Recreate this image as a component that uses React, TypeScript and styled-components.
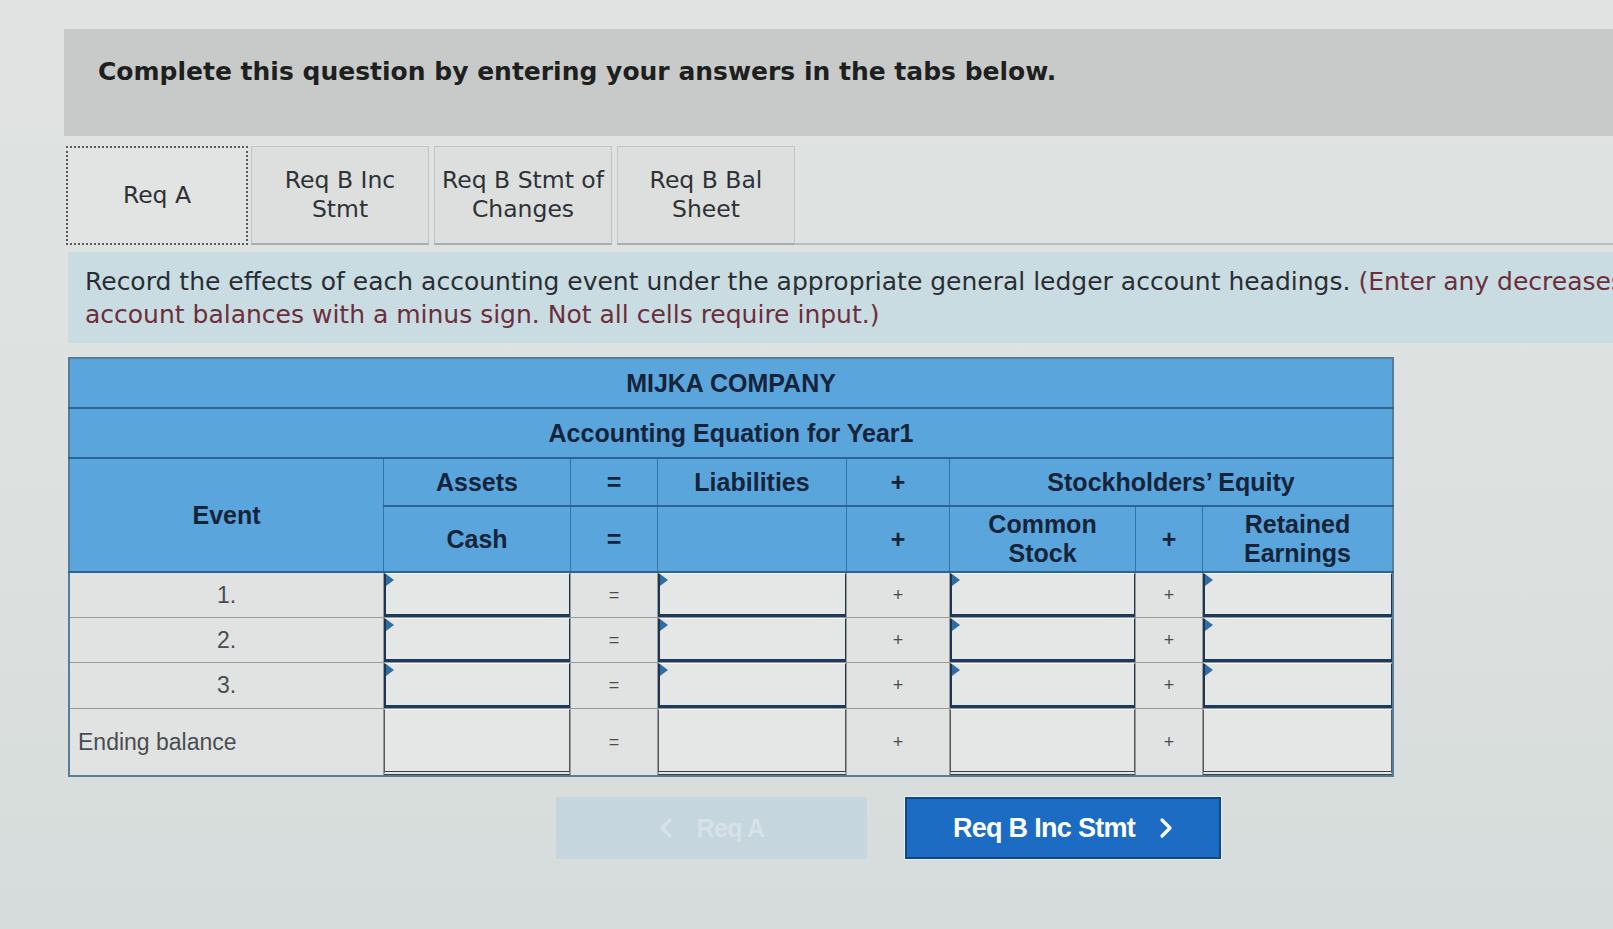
import styled, { createGlobalStyle } from 'styled-components'

const GlobalStyle = createGlobalStyle`
  html, body {
    margin: 0;
    padding: 0;
    overflow: hidden;
    background: #dce1df;
  }
  body {
    font-family: "DejaVu Sans", Verdana, sans-serif;
  }
`

const Page = styled.div`
  width: 1613px;
  height: 929px;
  padding: 29px 0 0 64px;
  box-sizing: border-box;
  overflow: hidden;
  background: linear-gradient(180deg, #e0e3e1 0%, #dce1df 60%, #d6dcdb 100%);
`

const Banner = styled.div`
  height: 107px;
  box-sizing: border-box;
  padding: 25px 0 0 34px;
  background: #c8cac9;
  font-family: "DejaVu Sans", Verdana, sans-serif;
  font-weight: bold;
  font-size: 25px;
  line-height: 36px;
  color: #1d1f20;
  white-space: nowrap;
`

const TabRow = styled.div`
  display: flex;
  align-items: flex-end;
  margin: 10px 0 0 2px;
`

const Tab = styled.div<{ $active?: boolean; $w: number }>`
  width: ${p => p.$w}px;
  height: 99px;
  box-sizing: border-box;
  margin-right: ${p => (p.$active ? 3 : 5)}px;
  display: flex;
  align-items: center;
  justify-content: center;
  text-align: center;
  font-size: 23.5px;
  line-height: 29px;
  color: #2e3236;
  background: ${p => (p.$active ? '#e1e4e2' : '#dcdfdd')};
  border: ${p => (p.$active ? '2px dotted #555a5e' : '1px solid #c2c5c4')};
  border-bottom: ${p => (p.$active ? '2px dotted #555a5e' : '2px solid #a9adac')};
`

const TabFill = styled.div`
  flex: 1;
  border-bottom: 2px solid #b9bdbc;
  height: 99px;
  box-sizing: border-box;
  margin-left: -5px;
`

const Instructions = styled.div`
  margin: 7px 0 0 4px;
  height: 91px;
  box-sizing: border-box;
  padding: 13px 0 0 17px;
  background: #c9dce2;
  font-size: 25px;
  line-height: 33px;
  color: #2a2e33;
  white-space: nowrap;
  overflow: hidden;
`

const Note = styled.span`
  color: #6b2f3c;
`

const Table = styled.table`
  margin: 14px 0 0 4px;
  border-collapse: collapse;
  border: 2px solid #577d98;
  font-family: "Liberation Sans", Arial, sans-serif;
`

const Head = styled.th<{ $w?: number; $h?: number }>`
  ${p => (p.$w ? `width: ${p.$w}px;` : '')}
  ${p => (p.$h ? `height: ${p.$h}px;` : '')}
  padding: 0;
  background: #5aa5db;
  border: 1px solid #3574a8;
  border-bottom: 2px solid #2c6496;
  color: #15243a;
  font-size: 25px;
  font-weight: bold;
  line-height: 29px;
  text-align: center;
`

const Title = styled(Head)`
  border-left: none;
  border-right: none;
`

const Row = styled.tr<{ $h: number }>`
  height: ${p => p.$h}px;
`

const Plain = styled.td<{ $left?: boolean; $small?: boolean }>`
  padding: 0;
  padding-left: ${p => (p.$left ? '8px' : '0')};
  background: #e1e3e2;
  border: 1px solid #979a99;
  color: #4a4d50;
  font-size: ${p => (p.$small ? '18px' : '23px')};
  text-align: ${p => (p.$left ? 'left' : 'center')};
  vertical-align: middle;
`

const FieldCell = styled.td`
  padding: 0;
  background: #e1e3e2;
  border: 1px solid #979a99;
  vertical-align: top;
`

const Field = styled.div<{ $h: number; $total?: boolean }>`
  position: relative;
  height: ${p => p.$h}px;
  box-sizing: border-box;
  background: #e5e7e6;
  border-top: 1px solid #f4f6f5;
  border-left: ${p => (p.$total ? '1px solid #55595c' : '2px solid #1e3552')};
  border-right: ${p => (p.$total ? '1px solid #55595c' : '1px solid #1e3552')};
  border-bottom: ${p => (p.$total ? '4px double #3d4144' : '3px solid #1c3a5e')};

  ${p =>
    p.$total
      ? ''
      : `&::before {
    content: '';
    position: absolute;
    left: 0;
    top: 0;
    border-top: 6px solid transparent;
    border-bottom: 6px solid transparent;
    border-left: 8px solid #2e6ea6;
  }`}
`

const ButtonRow = styled.div`
  display: flex;
  gap: 38px;
  margin: 20px 0 0 492px;
`

const NavButton = styled.div<{ $disabled?: boolean }>`
  width: ${p => (p.$disabled ? 311 : 316)}px;
  height: 62px;
  box-sizing: border-box;
  display: flex;
  align-items: center;
  justify-content: center;
  gap: 24px;
  font-family: "Liberation Sans", Arial, sans-serif;
  font-weight: bold;
  font-size: ${p => (p.$disabled ? 25 : 27)}px;
  letter-spacing: -0.7px;
  color: ${p => (p.$disabled ? '#d6e2e8' : '#ffffff')};
  background: ${p => (p.$disabled ? '#c6d6de' : '#1b6cc2')};
  border: ${p => (p.$disabled ? 'none' : '2px solid #0f4683')};
  box-shadow: ${p => (p.$disabled ? 'none' : '0 0 0 1px #e8f0f5')};
`

const Chevron = ({ dir, color }: { dir: 'left' | 'right'; color: string }) => (
  <svg width="14" height="22" viewBox="0 0 14 22">
    <path
      d={dir === 'right' ? 'M3 3 L11 11 L3 19' : 'M11 3 L3 11 L11 19'}
      fill="none"
      stroke={color}
      strokeWidth="3.2"
      strokeLinecap="round"
      strokeLinejoin="round"
    />
  </svg>
)

const rows = [
  { label: '1.', h: 45 },
  { label: '2.', h: 45 },
  { label: '3.', h: 46 },
]

export default function App() {
  return (
    <>
      <GlobalStyle />
      <Page>
        <Banner>Complete this question by entering your answers in the tabs below.</Banner>

        <TabRow>
          <Tab $active $w={182}>Req A</Tab>
          <Tab $w={178}>Req B Inc<br />Stmt</Tab>
          <Tab $w={178}>Req B Stmt of<br />Changes</Tab>
          <Tab $w={178}>Req B Bal<br />Sheet</Tab>
          <TabFill />
        </TabRow>

        <Instructions>
          Record the effects of each accounting event under the appropriate general ledger account headings.{' '}
          <Note>(Enter any decreases to</Note>
          <br />
          <Note>account balances with a minus sign. Not all cells require input.)</Note>
        </Instructions>

        <Table>
          <thead>
            <tr>
              <Title colSpan={8} $h={48}>MIJKA COMPANY</Title>
            </tr>
            <tr>
              <Title colSpan={8} $h={48}>Accounting Equation for Year1</Title>
            </tr>
            <tr>
              <Head rowSpan={2} $w={313}>Event</Head>
              <Head $w={186} $h={46}>Assets</Head>
              <Head $w={86}>=</Head>
              <Head $w={188}>Liabilities</Head>
              <Head $w={102}>+</Head>
              <Head colSpan={3}>Stockholders’ Equity</Head>
            </tr>
            <tr>
              <Head $h={64}>Cash</Head>
              <Head>=</Head>
              <Head />
              <Head>+</Head>
              <Head $w={185}>Common<br />Stock</Head>
              <Head $w={66}>+</Head>
              <Head $w={189}>Retained<br />Earnings</Head>
            </tr>
          </thead>
          <tbody>
            {rows.map(r => (
              <Row key={r.label} $h={r.h}>
                <Plain>{r.label}</Plain>
                <FieldCell><Field $h={r.h - 1} /></FieldCell>
                <Plain $small>=</Plain>
                <FieldCell><Field $h={r.h - 1} /></FieldCell>
                <Plain $small>+</Plain>
                <FieldCell><Field $h={r.h - 1} /></FieldCell>
                <Plain $small>+</Plain>
                <FieldCell><Field $h={r.h - 1} /></FieldCell>
              </Row>
            ))}
            <Row $h={67}>
              <Plain $left>Ending balance</Plain>
              <FieldCell><Field $total $h={66} /></FieldCell>
              <Plain $small>=</Plain>
              <FieldCell><Field $total $h={66} /></FieldCell>
              <Plain $small>+</Plain>
              <FieldCell><Field $total $h={66} /></FieldCell>
              <Plain $small>+</Plain>
              <FieldCell><Field $total $h={66} /></FieldCell>
            </Row>
          </tbody>
        </Table>

        <ButtonRow>
          <NavButton $disabled>
            <Chevron dir="left" color="#d6e2e8" />
            <span>Req A</span>
          </NavButton>
          <NavButton>
            <span>Req B Inc Stmt</span>
            <Chevron dir="right" color="#ffffff" />
          </NavButton>
        </ButtonRow>
      </Page>
    </>
  )
}
